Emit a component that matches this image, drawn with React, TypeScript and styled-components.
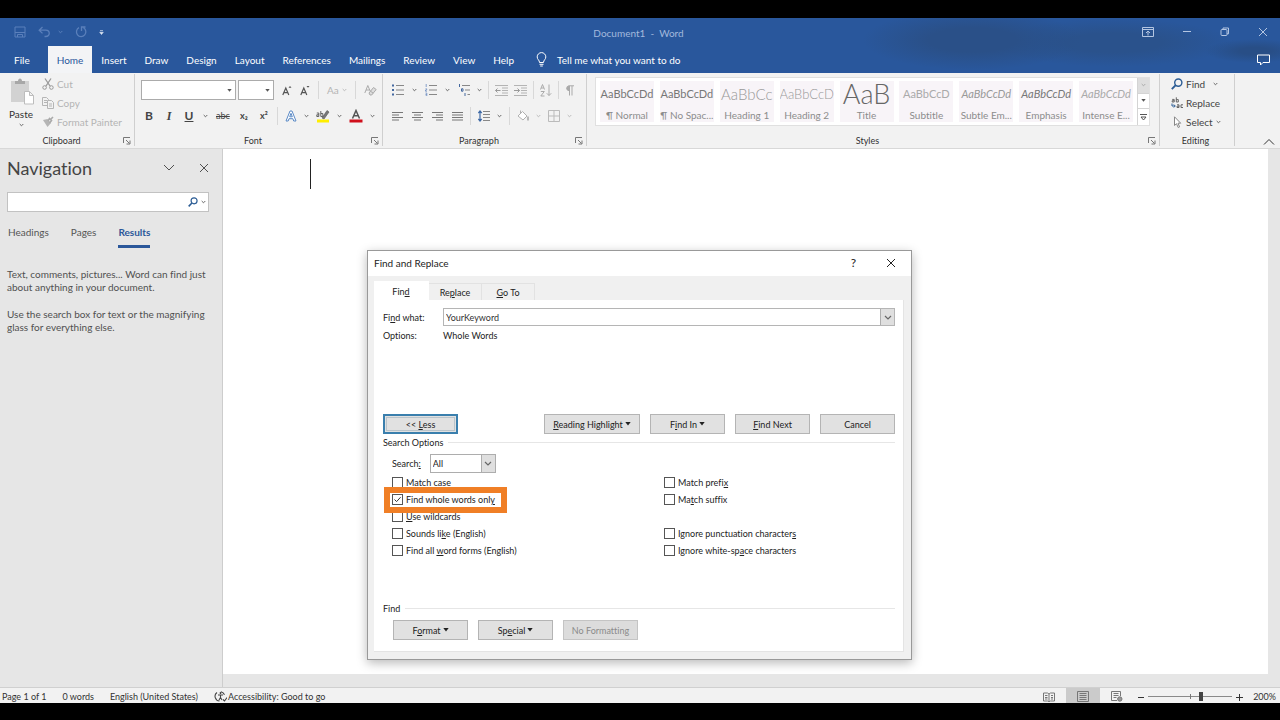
import React from 'react';
import styled, { createGlobalStyle, css } from 'styled-components';

const GlobalStyle = createGlobalStyle`
  * { box-sizing: border-box; }
  body { margin: 0; background: #000; font-variant-ligatures: none; }
  body, button, input, select { font-family: Lato, "Open Sans", sans-serif; font-size: 10px; }
  button { margin: 0; padding: 0; border: 0; background: none; color: inherit; font-variant-ligatures: none; }
  svg { display: block; flex: none; }
`;

/* ---------- window frame ---------- */

const Screen = styled.div`
  display: flex;
  flex-direction: column;
  min-height: 100vh;
  padding: 18px 0 17px;
  background: #000;
  color: #333;
`;

const Header = styled.header`
  color: #fff;
  background:
    radial-gradient(ellipse 110px 30px at 76% 40%, #2a5088 40%, transparent 100%),
    radial-gradient(ellipse 120px 24px at 87% 45%, #2a528c 40%, transparent 100%),
    radial-gradient(ellipse 50px 12px at 98% 60%, #284e86 30%, transparent 100%),
    #29579c;
`;

const TitleBar = styled.div`
  display: flex;
  align-items: center;
  justify-content: space-between;
  height: 28px;
`;

const QuickAccess = styled.div`
  display: flex;
  flex: 1;
  align-items: center;
  gap: 12px;
  padding-left: 14px;
  color: #5b80bb;
`;

const SplitTool = styled.span`
  display: flex;
  align-items: center;
  gap: 7px;
`;

const DocumentTitle = styled.h1`
  margin: 0;
  padding: 2px 5px 0 0;
  color: #a3b9dc;
  font-size: 10px;
  font-weight: 400;
  white-space: pre;
`;

const WindowButtons = styled.div`
  display: flex;
  flex: 1;
  justify-content: flex-end;
  gap: 28px;
  padding-right: 12px;
  color: #b4c6e2;
`;

const IconButton = styled.button`
  display: flex;
  align-items: center;
  justify-content: center;
`;

const TabBar = styled.nav`
  display: flex;
  align-items: stretch;
  height: 27px;
  padding-left: 5px;
`;

const RibbonTab = styled.button<{ $active?: boolean; $wide?: boolean }>`
  padding: 0 9px;
  line-height: 26px;
  ${p => p.$wide && css`padding-right: 18px;`}
  ${p => p.$active && css`
    background: #f3f4f6;
    color: #29579c;
  `}
`;

const TellMe = styled.button`
  display: flex;
  align-items: center;
  gap: 10px;
  margin-left: 13px;
`;

const CommentsButton = styled(IconButton)`
  margin: 0 10px 0 auto;
`;

/* ---------- ribbon ---------- */

const Ribbon = styled.div`
  display: flex;
  height: 76px;
  padding: 1px 0 2px;
  border-bottom: 1px solid #d8d8d8;
  background: #f2f2f2;
`;

const GroupFrame = styled.section<{ $width?: number }>`
  display: flex;
  flex-direction: column;
  justify-content: space-between;
  border-right: 1px solid #cfcfcf;
  ${p => (p.$width ? css`flex: 0 0 ${p.$width}px;` : css`flex: 1; min-width: 0;`)}
`;

const GroupFooter = styled.div`
  display: grid;
  grid-template-columns: 1fr auto;
  align-items: center;
  padding: 0 3px 0 0;
`;

const GroupTitle = styled.h2`
  margin: 0;
  font-size: 9px;
  font-weight: 400;
  line-height: 10px;
  text-align: center;
`;

const ClipboardTools = styled.div`
  display: flex;
  align-items: flex-start;
  gap: 8px;
  padding-left: 8px;
`;

const PasteButton = styled.button`
  display: flex;
  flex-direction: column;
  align-items: center;
  width: 26px;
  padding-top: 4px;
  gap: 3px;
  color: #333;
`;

const CommandList = styled.div`
  display: flex;
  flex-direction: column;
`;

const Command = styled.button<{ $disabled?: boolean }>`
  display: flex;
  align-items: center;
  height: 19px;
  gap: 3px;
  color: ${p => (p.$disabled ? '#b4b4b4' : '#444')};
`;

const ToolRows = styled.div<{ $inset: number }>`
  display: flex;
  flex-direction: column;
  gap: 4px;
  padding: 5px 0 0 ${p => p.$inset}px;
`;

const ToolRow = styled.div<{ $gap: number; $inset?: number }>`
  display: flex;
  align-items: center;
  height: 22px;
  padding-left: ${p => p.$inset ?? 0}px;
  gap: ${p => p.$gap}px;
  color: #666;
`;

const FontBox = styled.label<{ $width: number }>`
  display: flex;
  align-items: center;
  width: ${p => p.$width}px;
  height: 20px;
  padding-right: 3px;
  border: 1px solid #ababab;
  background: #fff;
`;

const BareInput = styled.input`
  flex: 1;
  min-width: 0;
  padding: 0 2px;
  border: 0;
  outline: 0;
  background: none;
  color: #333;
`;

const FormatButton = styled.button<{ $bold?: boolean; $small?: boolean }>`
  min-width: 12px;
  color: #444;
  font-size: ${p => (p.$small ? 9 : 12)}px;
  font-weight: ${p => (p.$bold ? 700 : 400)};
  line-height: 16px;
`;

const ItalicButton = styled(FormatButton)`
  font-family: "Liberation Serif", serif;
  font-style: italic;
`;

const Divider = styled.span`
  width: 1px;
  height: 18px;
  background: #d8d8d8;
`;

const Gallery = styled.div`
  display: flex;
  height: 49px;
  margin: 3px 9px 0 8px;
  border: 1px solid #e0e0e0;
  background: #fff;
`;

const GalleryCards = styled.div`
  display: flex;
  flex: 1;
  justify-content: space-between;
  padding: 3px 4px;
`;

const StyleCard = styled.button`
  display: flex;
  flex-direction: column;
  justify-content: space-between;
  width: 54px;
  height: 41px;
  overflow-x: clip;
  background: #f8f4f8;
`;

const Sample = styled.span<{ $size: number; $tone: string; $italic?: boolean }>`
  display: flex;
  align-items: center;
  justify-content: center;
  width: 54px;
  height: 26px;
  overflow-x: clip;
  color: ${p => p.$tone};
  font-size: ${p => p.$size}px;
  font-style: ${p => (p.$italic ? 'italic' : 'normal')};
  font-weight: ${p => (p.$size > 11 ? 300 : 400)};
  line-height: 26px;
  white-space: nowrap;
`;

const StyleName = styled.span`
  width: 54px;
  color: #8c8c8c;
  line-height: 14px;
  white-space: nowrap;
`;

const GallerySteps = styled.div`
  display: grid;
  grid-template-rows: repeat(3, 1fr);
  width: 12px;
  border-left: 1px solid #d4d4d4;
`;

const GalleryStep = styled(IconButton)<{ $off?: boolean }>`
  border-bottom: 1px solid #d4d4d4;
  background: ${p => (p.$off ? '#dedede' : '#fff')};
  color: ${p => (p.$off ? '#aaa' : '#555')};
  &:last-child { border-bottom: 0; }
`;

const EditingTools = styled(CommandList)`
  padding-left: 11px;
`;

const RibbonEnd = styled.div`
  display: flex;
  flex: 0 0 45px;
  align-items: flex-end;
  justify-content: flex-end;
  padding: 0 5px 0 0;
`;

/* ---------- body ---------- */

const Workspace = styled.main`
  position: relative;
  display: flex;
  flex: 1;
  min-height: 538px;
  background: #e6e6e6;
`;

const Navigation = styled.aside`
  flex: 0 0 223px;
  padding: 8px 13px 0 7px;
  border-right: 1px solid #cdcdcd;
  background: #e6e6e6;
  color: #505050;
`;

const NavHeader = styled.div`
  display: flex;
  align-items: center;
  gap: 24px;
`;

const NavTitle = styled.h2`
  flex: 1;
  margin: 0;
  color: #444;
  font-size: 18px;
  font-weight: 400;
  line-height: 22px;
`;

const NavSearch = styled.label`
  display: flex;
  align-items: center;
  height: 20px;
  margin-top: 13px;
  padding-right: 2px;
  gap: 3px;
  border: 1px solid #c2c2c2;
  background: #fff;
`;

const NavTabs = styled.div`
  display: flex;
  gap: 22px;
  margin-top: 14px;
  padding-left: 1px;
`;

const NavTab = styled.button<{ $active?: boolean }>`
  height: 22px;
  padding-bottom: 8px;
  border-bottom: 3px solid ${p => (p.$active ? '#2b579a' : 'transparent')};
  color: ${p => (p.$active ? '#2b579a' : '#555')};
  font-weight: ${p => (p.$active ? 700 : 400)};
  line-height: 12px;
`;

const NavHints = styled.div`
  display: grid;
  gap: 14px;
  margin-top: 20px;
  line-height: 13px;
`;

const NavHint = styled.p`
  margin: 0;
`;

const DocumentArea = styled.div`
  flex: 1;
  padding: 0 12px 13px 0;
`;

const Page = styled.article`
  height: 100%;
  padding: 10px 0 0 87px;
  background: #fff;
`;

const Caret = styled.div`
  width: 1px;
  height: 30px;
  background: #222;
`;

/* ---------- dialog ---------- */

const Dialog = styled.section`
  position: absolute;
  top: 101px;
  left: calc(50% - 273px);
  width: 545px;
  border: 1px solid #999;
  background: #f0f0f0;
  box-shadow: 0 3px 10px rgba(0, 0, 0, 0.28);
  color: #222;
  font-size: 9px;
  button, input, select { font-size: 9px; }
`;

const DialogTitleBar = styled.div`
  display: flex;
  align-items: center;
  height: 25px;
  padding: 0 15px 2px 6px;
  gap: 30px;
  background: #fff;
`;

const DialogTitle = styled.h2`
  flex: 1;
  margin: 0;
  font-size: 10px;
  font-weight: 400;
`;

const HelpButton = styled(IconButton)`
  && { font-size: 12px; }
`;

const DialogTabs = styled.div`
  display: flex;
  align-items: flex-end;
  padding: 5px 6px 0;
`;

const DialogTab = styled.button<{ $active?: boolean }>`
  width: ${p => (p.$active ? 55 : 53)}px;
  height: ${p => (p.$active ? 19 : 17)}px;
  border: 1px solid ${p => (p.$active ? '#fff' : '#e2e2e2')};
  border-width: 1px 1px 0 0;
  background: ${p => (p.$active ? '#fff' : '#f0f0f0')};
`;

const Panel = styled.div`
  margin: 0 7px 7px 6px;
  padding: 8px 8px 11px 9px;
  border-right: 1px solid #e4e4e4;
  border-bottom: 1px solid #e4e4e4;
  background: #fff;
`;

const FieldGrid = styled.div`
  display: grid;
  grid-template-columns: 60px 1fr;
  grid-auto-rows: 18px;
  align-items: center;
  height: 106px;
`;

const ComboBox = styled.div`
  display: flex;
  height: 18px;
  border: 1px solid #b5b5b5;
  background: #fff;
`;

const ComboArrow = styled(IconButton)`
  width: 14px;
  border-left: 1px solid #adadad;
  background: #dfdfdf;
  color: #666;
`;

const ButtonRow = styled.div`
  display: flex;
  gap: 10px;
`;

const PushButton = styled.button<{ $wide?: boolean; $focused?: boolean; $first?: boolean }>`
  display: flex;
  align-items: center;
  justify-content: center;
  width: ${p => (p.$wide ? 96 : 75)}px;
  height: 20px;
  gap: 2px;
  border: 1px solid #b4b4b4;
  background: #e1e1e1;
  white-space: pre;
  ${p => p.$first && css`margin-right: auto;`}
  ${p => p.$focused && css`
    border: 2px solid #3a7fad;
    outline: 1px solid #b9c4cb;
    outline-offset: -4px;
  `}
  &:disabled {
    border-color: #c4c4c4;
    background: #dcdcdc;
    color: #8a8a8a;
  }
`;

const Section = styled.fieldset`
  margin: 0;
  padding: 0;
  border: 0;
`;

const Legend = styled.legend`
  display: flex;
  align-items: center;
  width: 100%;
  height: 17px;
  padding: 0;
  gap: 5px;
  &::after {
    flex: 1;
    height: 1px;
    background: #e6e6e6;
    content: '';
  }
`;

const SearchRow = styled.div`
  display: flex;
  align-items: center;
  height: 20px;
  margin: 2px 0 1px;
  padding-left: 9px;
  gap: 9px;
`;

const SelectBox = styled.div`
  display: grid;
  grid-template-columns: 1fr 14px;
  width: 66px;
  height: 19px;
  border: 1px solid #adadad;
`;

const Select = styled.select`
  grid-area: 1 / 1 / 2 / 3;
  padding: 0 2px;
  border: 0;
  appearance: none;
  background: #fff;
  color: #222;
`;

const SelectArrow = styled.span`
  display: flex;
  grid-area: 1 / 2;
  align-items: center;
  justify-content: center;
  border-left: 1px solid #adadad;
  background: #dfdfdf;
  color: #666;
  pointer-events: none;
`;

const OptionColumns = styled.div`
  display: grid;
  grid-template-columns: 272px 1fr;
  grid-template-rows: repeat(5, 17px);
  grid-auto-flow: column;
  justify-items: start;
  height: 126px;
  padding-left: 9px;
`;

const Option = styled.label<{ $row: number }>`
  position: relative;
  display: flex;
  grid-row: ${p => p.$row};
  align-items: center;
  gap: 3px;
`;

const Tick = styled.input`
  width: 11px;
  height: 11px;
  margin: 0;
  border: 1px solid #555;
  appearance: none;
  background: #fff;
  &:checked {
    background: #fff url("data:image/svg+xml,%3Csvg xmlns='http://www.w3.org/2000/svg' viewBox='0 0 9 9'%3E%3Cpath d='M1.5 4.5 3.6 6.6 7.6 2.2' fill='none' stroke='%23333'/%3E%3C/svg%3E");
  }
`;

const Highlight = styled.span`
  position: absolute;
  inset: -4px -12px -5px -8px;
  z-index: 1;
  border: 6px solid #f07f26;
  pointer-events: none;
`;

const FormatRow = styled(ButtonRow)`
  padding: 3px 0 0 10px;
`;

/* ---------- status bar ---------- */

const StatusBar = styled.footer`
  display: flex;
  align-items: center;
  height: 16px;
  padding: 2px 4px 0 2px;
  overflow: hidden;
  border-top: 1px solid #d0d0d0;
  background: #f2f2f2;
  font-size: 9px;
`;

const StatusItem = styled.span`
  display: flex;
  align-items: center;
  margin-right: 16px;
  gap: 1px;
`;

const ViewModes = styled.div`
  display: flex;
  align-self: stretch;
  margin: -2px 3px 0 auto;
`;

const ViewMode = styled(IconButton)<{ $active?: boolean }>`
  width: 34px;
  padding-top: 2px;
  background: ${p => (p.$active ? '#cbcbcb' : 'transparent')};
  color: #777;
`;

const ZoomControl = styled.div`
  display: flex;
  align-items: center;
  gap: 3px;
`;

const ZoomRange = styled.input`
  width: 84px;
  height: 9px;
  margin: 0;
  appearance: none;
  background:
    linear-gradient(#777, #777) 50% 50% / 1px 5px no-repeat,
    linear-gradient(#8a8a8a, #8a8a8a) 50% 50% / 100% 1px no-repeat;
  &::-webkit-slider-thumb {
    width: 4px;
    height: 9px;
    appearance: none;
    background: #444;
  }
`;

const ZoomValue = styled.span`
  padding-left: 7px;
`;

/* ---------- icons ---------- */

const Icon = ({ w, h, children }: { w: number; h: number; children: React.ReactNode }) => (
  <svg width={w} height={h} viewBox={`0 0 ${w} ${h}`} fill="none" stroke="currentColor" strokeWidth="1" aria-hidden="true">
    {children}
  </svg>
);

const Drop = ({ tone = '#666' }: { tone?: string }) => (
  <Icon w={5} h={4}><path d="M.7 1 2.5 2.8 4.3 1" stroke={tone} /></Icon>
);
const SolidDrop = () => <Icon w={6} h={4}><path d="M.3 0h5.4L3 3.6z" fill="currentColor" stroke="none" /></Icon>;
const SmallSolidDrop = () => <Icon w={5} h={3}><path d="M.3 0h4.4L2.5 2.8z" fill="#555" stroke="none" /></Icon>;
const Chevron = () => <Icon w={8} h={5}><path d="M1 1l3 3 3-3" strokeWidth="1.2" /></Icon>;
const Launcher = () => (
  <Icon w={8} h={8}><path d="M.5 6V.5H7M3 3l3.5 3.5M7 3.5V7H3.5" stroke="#777" /></Icon>
);
const SaveIcon = () => (
  <Icon w={12} h={12}><path d="M1 1h10v10H1zM1 6.500h10M3.500 11V8.500h5V11" /></Icon>
);
const UndoIcon = () => (
  <Icon w={13} h={12}><path d="M4.500 1 1.200 4.200l3.300 3.200M1.500 4.200h6.300c4.600 0 4.600 6.300 0 6.300H6.500" strokeWidth="1.300" /></Icon>
);
const RedoIcon = () => (
  <Icon w={12} h={12}><path d="M8.500 1.800A4.700 4.700 0 1 1 4 1.700M6.500 5V1h4" strokeWidth="1.300" /></Icon>
);
const CustomizeIcon = () => <Icon w={5} h={5}><path d="M1 .5h3M.7 2.200h3.600L2.500 4.500z" fill="#dfe7f3" stroke="#dfe7f3" strokeWidth=".6" /></Icon>;
const RibbonOptionsIcon = () => (
  <Icon w={12} h={10}><path d="M.5.5h11v9H.5zM.5 2.500h11M6 8.500V4.300M4 6l2-2 2 2" /></Icon>
);
const MinimizeIcon = () => <Icon w={10} h={10}><path d="M1 4.500h8" /></Icon>;
const RestoreIcon = () => (
  <Icon w={10} h={10}><rect x="1" y="2.500" width="6" height="6" rx="1" /><path d="M3 2.500V1h5.500v5.800H7" /></Icon>
);
const CloseIcon = () => <Icon w={10} h={10}><path d="m1 1 8 8M9 1 1 9" /></Icon>;
const BulbIcon = () => (
  <Icon w={11} h={15}><path d="M3.500 10.500C3.500 8 1.200 7.600 1.200 4.900a4.300 4.300 0 0 1 8.600 0C9.800 7.600 7.500 8 7.500 10.500zM3.500 12.300h4M4.200 14h2.600" stroke="#fff" /></Icon>
);
const CommentIcon = () => (
  <Icon w={13} h={12}><path d="M.5 1h12v7.500H6L3.500 11V8.500h-3z" /></Icon>
);
const PasteIcon = () => (
  <Icon w={25} h={27}>
    <path d="M2 3h18v21H2z" fill="#d2d2d2" stroke="none" />
    <path d="M6 3h3c0-3.500 4-3.500 4 0h3v3H6z" fill="#a8a8a8" stroke="none" />
    <path d="M15.500 13.500h5l4 4v8.500h-9zM20.500 13.500v4h4" fill="#fff" stroke="#bdbdbd" />
  </Icon>
);
const CutIcon = () => (
  <Icon w={12} h={12}><path d="M3 .5 8 8M9 .5 4 8" stroke="#999" strokeWidth="1.300" /><circle cx="2.600" cy="9.500" r="1.800" stroke="#999" /><circle cx="9.400" cy="9.500" r="1.800" stroke="#999" /></Icon>
);
const CopyIcon = () => (
  <Icon w={12} h={12}><path d="M.5.5h4l2 2v6h-6zM2 3.500h3M2 5.500h3" stroke="#b5b5b5" /><path d="M5.500 3.500h4l2 2v6h-6zM7 7h3M7 9h3" fill="#f2f2f2" stroke="#b5b5b5" /></Icon>
);
const BrushIcon = () => (
  <Icon w={12} h={12}><path d="m1 4 4.500-1L9 7 5.500 11z" fill="#b5b5b5" stroke="none" /><path d="M6 5 7.500 2.500l2 2L7.500 7M8.500 3.500 11 1" stroke="#aaa" strokeWidth="1.600" /></Icon>
);
const GrowIcon = ({ down }: { down?: boolean }) => (
  <Icon w={10} h={11}>
    <path d="M.8 10 3.800 3l3 7M1.900 7.600h3.800" stroke="#555" strokeWidth="1.200" />
    <path d={down ? 'M6.500 1h3L8 2.800z' : 'M6.500 2.800h3L8 1z'} fill="#555" stroke="none" />
  </Icon>
);
const ClearIcon = () => (
  <Icon w={13} h={12}><path d="M.8 9 3.800 1.500l2.600 6M2 6h3.500" stroke="#aaa" /><path d="m5 9 4.500-5.500 2.700 2-4.500 5.500H6zM6.500 7.200l2.700 2" fill="#ddd" stroke="#aaa" /></Icon>
);
const EffectsIcon = () => (
  <Icon w={12} h={12}><path d="M1 11 5 1h2l4 10H8.700l-.8-2.300H4L3.200 11zM4.700 6.800h2.600L6 3.300z" fill="#fff" stroke="#5b8ac6" /></Icon>
);
const HighlighterIcon = () => (
  <Icon w={14} h={14}><path d="M6 9l5-7.500 2 1.500L8 10z" fill="#777" stroke="#555" strokeWidth=".6" /><path d="M1 10.500h12v3H1z" fill="#ffee00" stroke="none" /><path d="M.8 4h2v3.500h-2V5.800h2M4.800 2v5.500h2V4.500h-2" stroke="#555" strokeWidth=".9" /></Icon>
);
const FontColorIcon = () => (
  <Icon w={14} h={14}><path d="m3.500 9.500 3.500-8 3.500 8M4.800 6.800h4.400" stroke="#555" strokeWidth="1.500" /><path d="M.5 10.500h13v3H.5z" fill="#d0101c" stroke="none" /></Icon>
);
const BulletsIcon = ({ numbered }: { numbered?: boolean }) => (
  <Icon w={12} h={12}>
    <path d="M4 1.500h8M4 6h8M4 10.500h8" stroke="#888" />
    {numbered
      ? <path d="M1.200 0v3M.5 4.800h1.200v1.200H.5v1.200h1.500M.5 9h1.300v3H.5M.5 10.500h1.300" stroke="#6c8cc0" strokeWidth=".8" />
      : <path d="M0 1.500h2M0 6h2M0 10.500h2" stroke="#44689f" strokeWidth="1.800" />}
  </Icon>
);
const MultilevelIcon = () => (
  <Icon w={13} h={12}><path d="M4 1.500h8M7 6h5M9.500 10.500H12" stroke="#888" /><path d="M1.500 0v3M3.500 4.800h1.500v2.400H3.500zM7 9v3" stroke="#44689f" /></Icon>
);
const IndentIcon = ({ right }: { right?: boolean }) => (
  <Icon w={13} h={11}><path d="M0 .5h13M7 3h6M7 5.500h6M7 8h6M0 10.500h13" stroke="#b4b4b4" /><path d={right ? 'M0 5.500h5.500M3.500 3.500l2 2-2 2' : 'M5.500 5.500H.5M2.500 3.500l-2 2 2 2'} stroke="#999" /></Icon>
);
const SortIcon = () => (
  <Icon w={12} h={13}><path d="m.5 5.500 2-5 2 5M1.200 4h2.600M.8 7.500h3.500L.8 12h3.700M9 .5v11M6.800 9.300 9 11.500l2.200-2.200" stroke="#aaa" /></Icon>
);
const PilcrowIcon = () => (
  <Icon w={9} h={11}><path d="M4 1a2.300 2.300 0 0 0 0 4.600z" fill="#aaa" stroke="#aaa" /><path d="M4.500 10.500V.8M7 10.500V.8M3.500.8H9" stroke="#aaa" /></Icon>
);
const AlignIcon = ({ mode }: { mode: 'left' | 'center' | 'right' | 'justify' }) => {
  const short = { left: 'M0 3h7M0 8h7', center: 'M2 3h7M2 8h7', right: 'M4 3h7M4 8h7', justify: 'M0 3h11M0 8h11' }[mode];
  return <Icon w={11} h={9}><path d={`M0 .500h11M0 5.500h11${short}`} stroke="#777" /></Icon>;
};
const SpacingIcon = () => (
  <Icon w={12} h={12}><path d="M5 1.500h7M5 4.500h7M5 7.500h7M5 10.500h7" stroke="#888" /><path d="M2 1v10M.3 3 2 1l1.700 2M.3 9 2 11l1.700-2" stroke="#3c68a5" strokeWidth="1.200" /></Icon>
);
const BucketIcon = () => (
  <Icon w={12} h={12}><path d="m1 6 4.500-4.500L10 6l-4 4zM3.500 3V.5" fill="#fff" stroke="#b0b0b0" /><path d="M11 6.500v4" stroke="#aaa" strokeWidth="1.600" /></Icon>
);
const BordersIcon = () => (
  <Icon w={12} h={12}><path d="M.5.5h11v11H.5zM6 .5v11M.5 6h11" stroke="#bbb" /></Icon>
);
const LensIcon = ({ size = 12 }: { size?: number }) => (
  <svg width={size} height={size} viewBox="0 0 12 12" fill="none" stroke="#2b5c94" strokeWidth="1.400" aria-hidden="true">
    <circle cx="7.300" cy="4.600" r="3.600" /><path d="M4.700 7.200.8 11.200" strokeWidth="1.900" />
  </svg>
);
const ReplaceIcon = () => (
  <Icon w={12} h={12}>
    <path d="M1.200 2.400h2v2.600h-2V3.700h2M5.300.3V5h2V2.600h-2M6 7.800h2v2.700H6V9.200h2M12 7.800h-2v2.700h2" stroke="#666" />
    <path d="M1 6.500v2.500h3M2.800 7.500 4.300 9l-1.500 1.500" stroke="#2b5c94" />
  </Icon>
);
const PointerIcon = () => <Icon w={12} h={12}><path d="M3.500.8v8.700l2-1.800 1.700 3.800 1.400-.6L7 7.200h2.700z" fill="#fff" stroke="#888" /></Icon>;
const AccessibilityIcon = () => (
  <Icon w={13} h={11}><path d="M5.500 10A4.700 4.700 0 0 1 3 1.500M7 .8a5 5 0 0 1 3.500 3M4 4h5M6.500 4v3M6.500 6.500 5 9M6.500 6.500 8 9M9 8.500l1.500 1.500L13 6.500" stroke="#444" strokeWidth="1.100" /><circle cx="6.500" cy="2" r=".6" fill="#444" /></Icon>
);
const ReadModeIcon = () => (
  <Icon w={12} h={10}><path d="M.5 1h4L6 2l1.500-1h4v8h-4L6 10 4.500 9h-4zM6 2v8M2 3.500h2.500M2 5.500h2.500M8 3.500h2M8 5.500h2M2 7h2.500M8 7h2" /></Icon>
);
const PrintLayoutIcon = () => <Icon w={12} h={11}><path d="M.5.5h11v10H.5zM2.500 2.500h7M2.500 4.500h7M2.500 6.500h7M2.500 8.500h7" /></Icon>;
const WebLayoutIcon = () => (
  <Icon w={12} h={11}><path d="M6 9.500H.5v-9h9V5M2.500 2.500h5M2.500 4.500h5M2.500 6.500h3" /><circle cx="8.800" cy="8" r="2.200" fill="#999" /></Icon>
);

/* ---------- data ---------- */

const ribbonTabs = ['File', 'Home', 'Insert', 'Draw', 'Design', 'Layout', 'References', 'Mailings', 'Review', 'View', 'Help'];

const styleCards = [
  { sample: 'AaBbCcDd', name: '¶ Normal', size: 11, tone: '#777' },
  { sample: 'AaBbCcDd', name: '¶ No Spac...', size: 11, tone: '#777' },
  { sample: 'AaBbCc', name: 'Heading 1', size: 15, tone: '#999' },
  { sample: 'AaBbCcD', name: 'Heading 2', size: 13, tone: '#999' },
  { sample: 'AaB', name: 'Title', size: 27, tone: '#666' },
  { sample: 'AaBbCcD', name: 'Subtitle', size: 11, tone: '#aaa' },
  { sample: 'AaBbCcDd', name: 'Subtle Em...', size: 11, tone: '#999', italic: true },
  { sample: 'AaBbCcDd', name: 'Emphasis', size: 11, tone: '#777', italic: true },
  { sample: 'AaBbCcDd', name: 'Intense E...', size: 11, tone: '#aaa', italic: true },
];

const searchOptions = [
  { row: 1, label: <>Matc<u>h</u> case</> },
  { row: 2, label: <>Find whole words onl<u>y</u></>, checked: true },
  { row: 3, label: <><u>U</u>se wildcards</> },
  { row: 4, label: <>Sounds li<u>k</u>e (English)</> },
  { row: 5, label: <>Find all <u>w</u>ord forms (English)</> },
  { row: 1, label: <>Match prefi<u>x</u></> },
  { row: 2, label: <>Ma<u>t</u>ch suffix</> },
  { row: 4, label: <>Ignore punctuation character<u>s</u></> },
  { row: 5, label: <>Ignore white-sp<u>a</u>ce characters</> },
];

/* ---------- parts ---------- */

const Group = ({ title, width, launcher, children }: { title: string; width?: number; launcher?: boolean; children: React.ReactNode }) => (
  <GroupFrame $width={width}>
    {children}
    <GroupFooter>
      <GroupTitle>{title}</GroupTitle>
      {launcher && <IconButton aria-label={`${title} settings`}><Launcher /></IconButton>}
    </GroupFooter>
  </GroupFrame>
);

const FindDialog = () => (
  <Dialog role="dialog" aria-label="Find and Replace">
    <DialogTitleBar>
      <DialogTitle>Find and Replace</DialogTitle>
      <HelpButton aria-label="Help">?</HelpButton>
      <IconButton aria-label="Close"><CloseIcon /></IconButton>
    </DialogTitleBar>
    <DialogTabs>
      <DialogTab $active>Fin<u>d</u></DialogTab>
      <DialogTab>Re<u>p</u>lace</DialogTab>
      <DialogTab><u>G</u>o To</DialogTab>
    </DialogTabs>
    <Panel>
      <FieldGrid>
        <label htmlFor="find-what">Fi<u>n</u>d what:</label>
        <ComboBox>
          <BareInput id="find-what" defaultValue="YourKeyword" />
          <ComboArrow aria-label="Recent searches"><Chevron /></ComboArrow>
        </ComboBox>
        <span>Options:</span>
        <span>Whole Words</span>
      </FieldGrid>
      <ButtonRow>
        <PushButton $focused $first><span>{'<< '}<u>L</u>ess</span></PushButton>
        <PushButton $wide><span><u>R</u>eading Highlight</span><SolidDrop /></PushButton>
        <PushButton><span>F<u>i</u>nd In</span><SolidDrop /></PushButton>
        <PushButton><span><u>F</u>ind Next</span></PushButton>
        <PushButton>Cancel</PushButton>
      </ButtonRow>
      <Section>
        <Legend>Search Options</Legend>
        <SearchRow>
          <label htmlFor="direction">Search<u>:</u></label>
          <SelectBox>
            <Select id="direction" defaultValue="All">
              <option>All</option>
              <option>Down</option>
              <option>Up</option>
            </Select>
            <SelectArrow><Chevron /></SelectArrow>
          </SelectBox>
        </SearchRow>
        <OptionColumns>
          {searchOptions.map((o, i) => (
            <Option key={i} $row={o.row}>
              <Tick type="checkbox" defaultChecked={o.checked} />
              <span>{o.label}</span>
              {o.checked && <Highlight />}
            </Option>
          ))}
        </OptionColumns>
      </Section>
      <Section>
        <Legend>Find</Legend>
        <FormatRow>
          <PushButton><span>F<u>o</u>rmat</span><SolidDrop /></PushButton>
          <PushButton><span>Sp<u>e</u>cial</span><SolidDrop /></PushButton>
          <PushButton disabled>No Formatting</PushButton>
        </FormatRow>
      </Section>
    </Panel>
  </Dialog>
);

export default function App() {
  return (
    <>
      <GlobalStyle />
      <Screen>
        <Header>
          <TitleBar>
            <QuickAccess>
              <IconButton aria-label="Save"><SaveIcon /></IconButton>
              <SplitTool>
                <IconButton aria-label="Undo"><UndoIcon /></IconButton>
                <Drop tone="#5b80bb" />
              </SplitTool>
              <IconButton aria-label="Redo"><RedoIcon /></IconButton>
              <IconButton aria-label="Customize toolbar"><CustomizeIcon /></IconButton>
            </QuickAccess>
            <DocumentTitle>{'Document1  -  Word'}</DocumentTitle>
            <WindowButtons>
              <IconButton aria-label="Ribbon display options"><RibbonOptionsIcon /></IconButton>
              <IconButton aria-label="Minimize"><MinimizeIcon /></IconButton>
              <IconButton aria-label="Restore"><RestoreIcon /></IconButton>
              <IconButton aria-label="Close window"><CloseIcon /></IconButton>
            </WindowButtons>
          </TitleBar>
          <TabBar>
            {ribbonTabs.map(t => (
              <RibbonTab key={t} $active={t === 'Home'} $wide={t === 'File'}>{t}</RibbonTab>
            ))}
            <TellMe><BulbIcon />Tell me what you want to do</TellMe>
            <CommentsButton aria-label="Comments"><CommentIcon /></CommentsButton>
          </TabBar>
        </Header>

        <Ribbon>
          <Group title="Clipboard" width={135} launcher>
            <ClipboardTools>
              <PasteButton><PasteIcon />Paste<Drop /></PasteButton>
              <CommandList>
                <Command $disabled><CutIcon />Cut</Command>
                <Command $disabled><CopyIcon />Copy</Command>
                <Command $disabled><BrushIcon />Format Painter</Command>
              </CommandList>
            </ClipboardTools>
          </Group>

          <Group title="Font" width={248} launcher>
            <ToolRows $inset={6}>
              <ToolRow $gap={8}>
                <ToolRow $gap={2}>
                  <FontBox $width={95}><BareInput aria-label="Font name" /><SmallSolidDrop /></FontBox>
                  <FontBox $width={36}><BareInput aria-label="Font size" /><SmallSolidDrop /></FontBox>
                </ToolRow>
                <IconButton aria-label="Grow font"><GrowIcon /></IconButton>
                <IconButton aria-label="Shrink font"><GrowIcon down /></IconButton>
                <Divider />
                <Command $disabled>Aa<Drop tone="#bbb" /></Command>
                <Divider />
                <IconButton aria-label="Clear formatting"><ClearIcon /></IconButton>
              </ToolRow>
              <ToolRow $gap={7} $inset={2}>
                <ToolRow $gap={8}>
                  <FormatButton $bold>B</FormatButton>
                  <ItalicButton $bold>I</ItalicButton>
                  <FormatButton $bold><u>U</u></FormatButton>
                  <Drop />
                  <FormatButton $small><s>abc</s></FormatButton>
                  <FormatButton $bold $small>x₂</FormatButton>
                  <FormatButton $bold $small>x²</FormatButton>
                </ToolRow>
                <Divider />
                <IconButton aria-label="Text effects"><EffectsIcon /></IconButton>
                <Drop />
                <IconButton aria-label="Highlight color"><HighlighterIcon /></IconButton>
                <Drop />
                <IconButton aria-label="Font color"><FontColorIcon /></IconButton>
                <Drop />
              </ToolRow>
            </ToolRows>
          </Group>

          <Group title="Paragraph" width={204} launcher>
            <ToolRows $inset={9}>
              <ToolRow $gap={6}>
                <ToolRow $gap={8}>
                  <IconButton aria-label="Bullets"><BulletsIcon /></IconButton><Drop />
                  <IconButton aria-label="Numbering"><BulletsIcon numbered /></IconButton><Drop />
                  <IconButton aria-label="Multilevel list"><MultilevelIcon /></IconButton>
                </ToolRow>
                <Drop />
                <Divider />
                <IconButton aria-label="Decrease indent"><IndentIcon /></IconButton>
                <IconButton aria-label="Increase indent"><IndentIcon right /></IconButton>
                <Divider />
                <IconButton aria-label="Sort"><SortIcon /></IconButton>
                <Divider />
                <IconButton aria-label="Show marks"><PilcrowIcon /></IconButton>
              </ToolRow>
              <ToolRow $gap={7}>
                <ToolRow $gap={9}>
                  <IconButton aria-label="Align left"><AlignIcon mode="left" /></IconButton>
                  <IconButton aria-label="Center"><AlignIcon mode="center" /></IconButton>
                  <IconButton aria-label="Align right"><AlignIcon mode="right" /></IconButton>
                  <IconButton aria-label="Justify"><AlignIcon mode="justify" /></IconButton>
                </ToolRow>
                <Divider />
                <IconButton aria-label="Line spacing"><SpacingIcon /></IconButton><Drop />
                <Divider />
                <IconButton aria-label="Shading"><BucketIcon /></IconButton><Drop tone="#bbb" />
                <IconButton aria-label="Borders"><BordersIcon /></IconButton><Drop tone="#bbb" />
              </ToolRow>
            </ToolRows>
          </Group>

          <Group title="Styles" launcher>
            <Gallery>
              <GalleryCards>
                {styleCards.map(c => (
                  <StyleCard key={c.name}>
                    <Sample $size={c.size} $tone={c.tone} $italic={c.italic}>{c.sample}</Sample>
                    <StyleName>{c.name}</StyleName>
                  </StyleCard>
                ))}
              </GalleryCards>
              <GallerySteps>
                <GalleryStep $off aria-label="Previous styles"><Drop tone="#aaa" /></GalleryStep>
                <GalleryStep aria-label="Next styles"><SmallSolidDrop /></GalleryStep>
                <GalleryStep aria-label="More styles"><Icon w={7} h={7}><path d="M0 .5h7M1 3h5L3.500 6z" /></Icon></GalleryStep>
              </GallerySteps>
            </Gallery>
          </Group>

          <Group title="Editing" width={75}>
            <EditingTools>
              <Command><LensIcon />Find&nbsp;&nbsp;<Drop /></Command>
              <Command><ReplaceIcon />Replace</Command>
              <Command><PointerIcon />Select<Drop /></Command>
            </EditingTools>
          </Group>

          <RibbonEnd>
            <IconButton aria-label="Collapse ribbon"><Icon w={12} h={8}><path d="m1 6.500 5-5 5 5" /></Icon></IconButton>
          </RibbonEnd>
        </Ribbon>

        <Workspace>
          <Navigation>
            <NavHeader>
              <NavTitle>Navigation</NavTitle>
              <IconButton aria-label="Pane options"><Icon w={12} h={8}><path d="m1 1 5 5 5-5" /></Icon></IconButton>
              <IconButton aria-label="Close pane"><CloseIcon /></IconButton>
            </NavHeader>
            <NavSearch>
              <BareInput aria-label="Search document" />
              <LensIcon size={10} />
              <Drop />
            </NavSearch>
            <NavTabs>
              <NavTab>Headings</NavTab>
              <NavTab>Pages</NavTab>
              <NavTab $active>Results</NavTab>
            </NavTabs>
            <NavHints>
              <NavHint>Text, comments, pictures... Word can find just about anything in your document.</NavHint>
              <NavHint>Use the search box for text or the magnifying glass for everything else.</NavHint>
            </NavHints>
          </Navigation>
          <DocumentArea>
            <Page><Caret /></Page>
          </DocumentArea>
          <FindDialog />
        </Workspace>

        <StatusBar>
          <StatusItem>Page 1 of 1</StatusItem>
          <StatusItem>0 words</StatusItem>
          <StatusItem>English (United States)</StatusItem>
          <StatusItem><AccessibilityIcon />Accessibility: Good to go</StatusItem>
          <ViewModes>
            <ViewMode aria-label="Read mode"><ReadModeIcon /></ViewMode>
            <ViewMode $active aria-label="Print layout"><PrintLayoutIcon /></ViewMode>
            <ViewMode aria-label="Web layout"><WebLayoutIcon /></ViewMode>
          </ViewModes>
          <ZoomControl>
            <IconButton aria-label="Zoom out"><Icon w={8} h={8}><path d="M1 4.500h6" /></Icon></IconButton>
            <ZoomRange type="range" min="0" max="100" defaultValue="63" aria-label="Zoom" />
            <IconButton aria-label="Zoom in"><Icon w={8} h={8}><path d="M1 4.500h7M4.500 1v7" /></Icon></IconButton>
            <ZoomValue>200%</ZoomValue>
          </ZoomControl>
        </StatusBar>
      </Screen>
    </>
  );
}
